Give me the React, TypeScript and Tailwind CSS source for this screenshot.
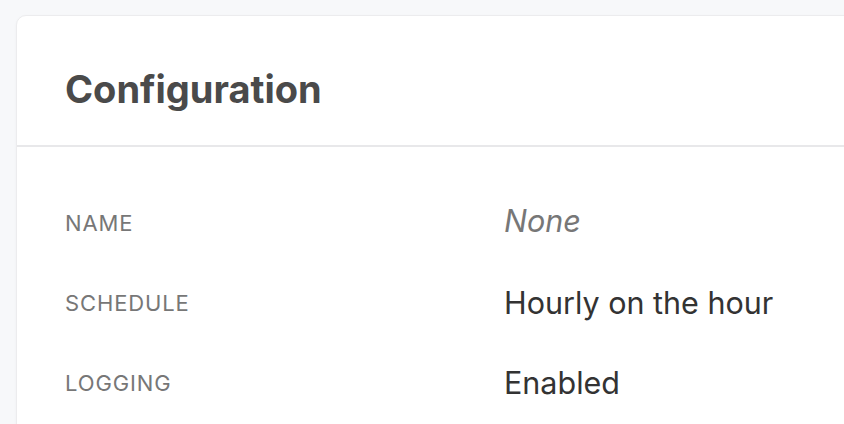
export default function App() {
  const rows = [
    { label: "NAME", value: "None", empty: true },
    { label: "SCHEDULE", value: "Hourly on the hour" },
    { label: "LOGGING", value: "Enabled" },
  ];

  return (
    <div
      className="h-[424px] w-[844px] overflow-hidden bg-[#f7f8fa] pl-[16px] pt-[15px]"
      style={{ fontFamily: "Inter, 'Noto Sans', sans-serif" }}
    >
      <div className="h-[500px] w-[900px] rounded-tl-[10px] border border-[#ececee] bg-white shadow-[0_1px_3px_rgba(0,0,0,0.04)]">
        {/* Header */}
        <div className="flex h-[131px] items-center border-b-2 border-[#e8e8ea] px-[48px] pt-[16px]">
          <h2 className="text-[38px] font-bold leading-none text-[#4a4a4a]">Configuration</h2>
        </div>

        {/* Settings list */}
        <div className="px-[48px] pt-[36px]">
          {rows.map((r) => (
            <div key={r.label} className="grid h-[80px] grid-cols-[439px_1fr] items-center">
              <span className="text-[22px] tracking-[0.04em] text-[#777777]">{r.label}</span>
              <span
                className={
                  r.empty
                    ? "-mt-[4px] text-[30.5px] italic text-[#777777]"
                    : "-mt-[1px] text-[30.5px] text-[#333333]"
                }
              >
                {r.value}
              </span>
            </div>
          ))}
        </div>
      </div>
    </div>
  );
}
